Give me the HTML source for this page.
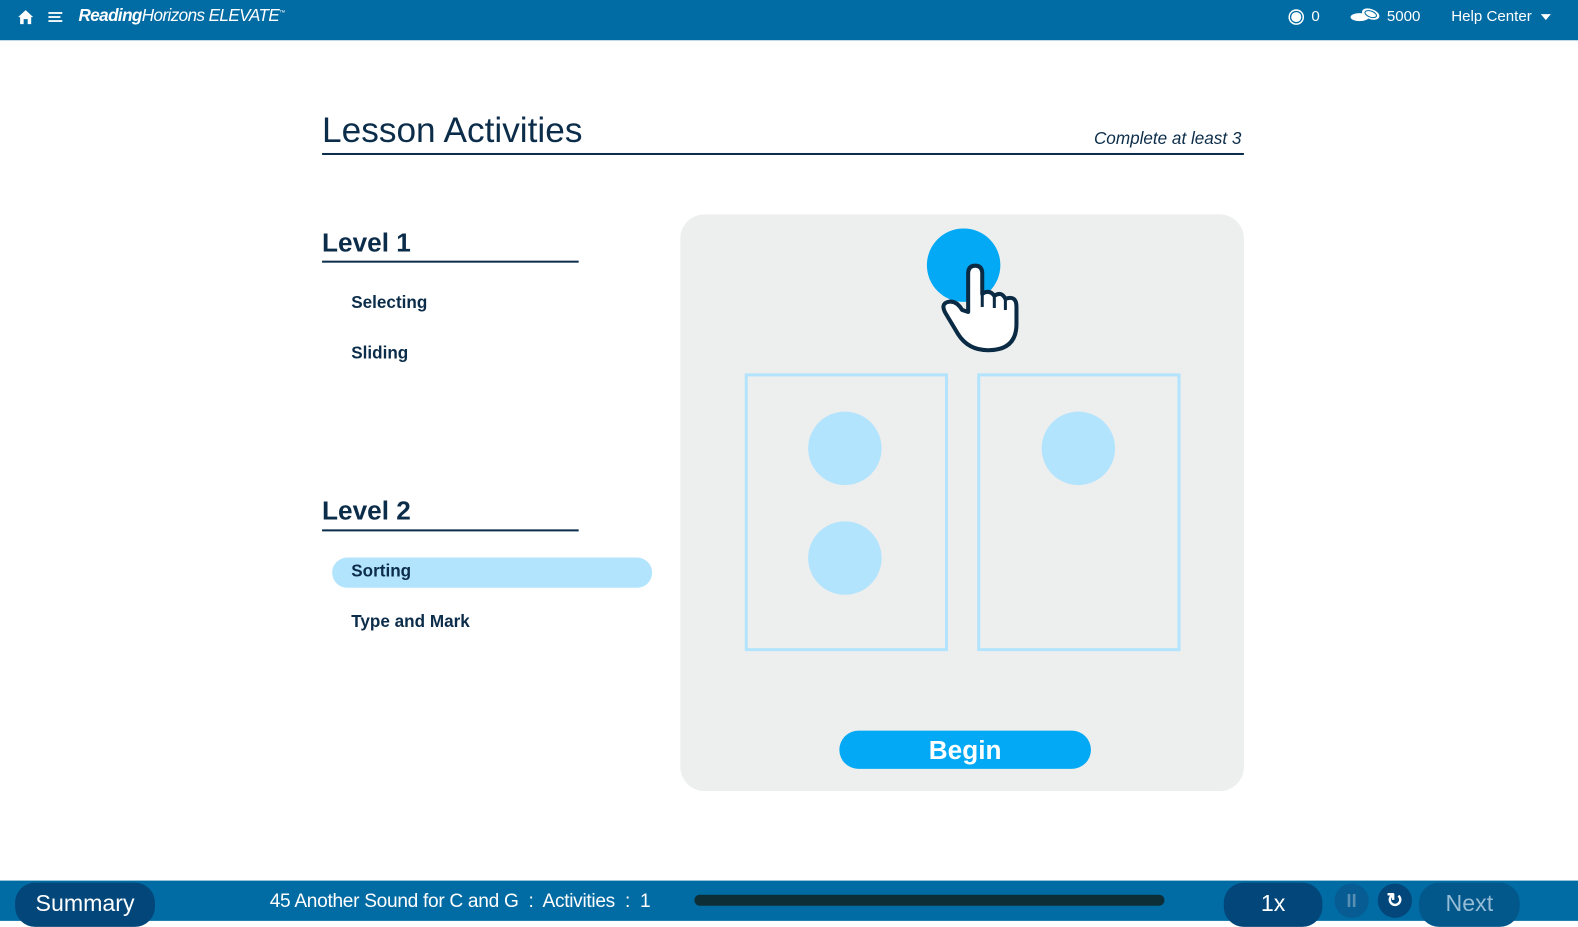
<!DOCTYPE html>
<html><head><style>
*{margin:0;padding:0;box-sizing:border-box}
body{width:1578px;height:917px;background:#fff;font-family:"Liberation Sans",sans-serif;position:relative;overflow:hidden;color:#0c2d4a}
#w{position:absolute;left:0;top:0;width:1568px;height:911px;transform:scale(1.0064);transform-origin:0 0}
.top{position:absolute;left:0;top:0;width:1578px;height:40px;background:#016ba3;color:#fff}
.abs{position:absolute}
.bot{position:absolute;left:0;top:875px;width:1578px;height:40px;background:#016ba3;color:#fff}
.pill{position:absolute;border-radius:20px;text-align:center}
</style></head><body><div id="w">
<div class="top">
 <svg class="abs" style="left:17px;top:9px" width="17" height="16" viewBox="0 0 17 16"><path d="M8.5 1 L16 8 L14 8 L14 15 L10.5 15 L10.5 10 L6.5 10 L6.5 15 L3 15 L3 8 L1 8 Z" fill="#fff"/></svg>
 <svg class="abs" style="left:48px;top:11px" width="14" height="12"><rect y="1" width="14" height="1.8" fill="#fff"/><rect y="5" width="12" height="1.8" fill="#fff"/><rect y="9" width="14" height="1.8" fill="#fff"/></svg>
 <div class="abs" style="left:78px;top:6px;font-size:17px;font-style:italic;letter-spacing:-0.6px"><b>Reading</b>Horizons ELEVATE<sup style="font-size:6px">™</sup></div>
 <svg class="abs" style="left:1279px;top:8px" width="18" height="18"><circle cx="9" cy="9" r="7" fill="none" stroke="#fff" stroke-width="1.5"/><circle cx="9" cy="9" r="5" fill="#fff"/></svg>
 <div class="abs" style="left:1303px;top:8px;font-size:15px">0</div>
 <svg class="abs" style="left:1341px;top:6px" width="32" height="18" viewBox="0 0 32 18"><ellipse cx="10" cy="11" rx="9" ry="4" fill="#fff"/><ellipse cx="21" cy="8" rx="9" ry="5" fill="#fff" transform="rotate(20 21 8)"/><ellipse cx="21" cy="8" rx="6" ry="3" fill="none" stroke="#016ba3" stroke-width="1" transform="rotate(20 21 8)"/></svg>
 <div class="abs" style="left:1378px;top:8px;font-size:15px">5000</div>
 <div class="abs" style="left:1442px;top:8px;font-size:15px">Help Center</div>
 <svg class="abs" style="left:1530px;top:13px" width="12" height="8"><path d="M1 1 L11 1 L6 7 Z" fill="#fff"/></svg>
</div>

<div class="abs" style="left:320px;top:110px;font-size:35px;font-weight:300;color:#0c2d4a">Lesson Activities</div>
<div class="abs" style="left:1087px;top:128px;font-size:17px;font-style:italic">Complete at least 3</div>
<div class="abs" style="left:320px;top:152px;width:916px;height:1.5px;background:#0c2d4a"></div>

<div class="abs" style="left:320px;top:226px;font-size:26px;font-weight:bold">Level 1</div>
<div class="abs" style="left:320px;top:259px;width:255px;height:1.5px;background:#0c2d4a"></div>
<div class="abs" style="left:349px;top:291px;font-size:17px;font-weight:bold">Selecting</div>
<div class="abs" style="left:349px;top:341px;font-size:17px;font-weight:bold">Sliding</div>

<div class="abs" style="left:320px;top:492px;font-size:26px;font-weight:bold">Level 2</div>
<div class="abs" style="left:320px;top:526px;width:255px;height:1.5px;background:#0c2d4a"></div>
<div class="abs" style="left:330px;top:554px;width:318px;height:30px;border-radius:15px;background:#b3e4fd"></div>
<div class="abs" style="left:349px;top:558px;font-size:17px;font-weight:bold">Sorting</div>
<div class="abs" style="left:349px;top:608px;font-size:17px;font-weight:bold">Type and Mark</div>

<div class="abs" style="left:676px;top:213px;width:560px;height:573px;border-radius:24px;background:#edeeee"></div>
<div class="abs" style="left:740px;top:371px;width:202px;height:276px;border:3px solid #b3e4fd"></div>
<div class="abs" style="left:971px;top:371px;width:202px;height:276px;border:3px solid #b3e4fd"></div>
<div class="abs" style="left:803px;top:409px;width:73px;height:73px;border-radius:50%;background:#b3e4fd"></div>
<div class="abs" style="left:803px;top:518px;width:73px;height:73px;border-radius:50%;background:#b3e4fd"></div>
<div class="abs" style="left:1035px;top:409px;width:73px;height:73px;border-radius:50%;background:#b3e4fd"></div>
<div class="abs" style="left:921px;top:227px;width:73px;height:73px;border-radius:50%;background:#03a9f4"></div>
<svg class="abs" style="left:0;top:0" width="1578" height="917"><path d="M962 310 L962 272 Q962 264 969 264 Q976 264 976 272 L976 292 Q983 287 988 294 Q995 289 999 297 Q1010 293 1010 305 L1010 322 Q1010 348 982 348 Q962 348 952 332 L940 312 Q934 302 942 300 Q950 298 956 308 Z" fill="#fff" stroke="#0b2b45" stroke-width="4" stroke-linejoin="round"/><path d="M976 292 L976 305 M988 294 L988 306 M999 297 L999 308" stroke="#0b2b45" stroke-width="3" fill="none"/></svg>
<div class="pill" style="left:834px;top:726px;width:250px;height:38px;background:#03a9f4;color:#fff;font-size:26px;font-weight:bold;line-height:38px">Begin</div>

<div class="bot">
 <div class="pill" style="left:15px;top:2px;width:139px;height:44px;background:#02467a;font-size:23px;line-height:36px;padding-top:2px">Summary</div>
 <div class="abs" style="left:268px;top:10px;font-size:19px;letter-spacing:-0.3px">45 Another Sound for C and G &nbsp;:&nbsp; Activities &nbsp;:&nbsp; 1</div>
 <div class="abs" style="left:690px;top:14px;width:467px;height:11px;border-radius:6px;background:#0d2e36"></div>
 <div class="pill" style="left:1216px;top:2px;width:98px;height:44px;background:#02467a;font-size:23px;line-height:36px;padding-top:2px">1x</div>
 <div class="pill" style="left:1326px;top:3px;width:34px;height:34px;border-radius:50%;background:#075d93;color:#5a8fb5;font-size:18px;line-height:34px;font-weight:bold">II</div>
 <div class="pill" style="left:1369px;top:3px;width:34px;height:34px;border-radius:50%;background:#02467a;font-size:20px;line-height:34px;font-weight:bold">↻</div>
 <div class="pill" style="left:1410px;top:2px;width:100px;height:44px;background:#02578b;color:#94bcd5;font-size:23px;line-height:36px;padding-top:2px">Next</div>
</div>
</div></body></html>
